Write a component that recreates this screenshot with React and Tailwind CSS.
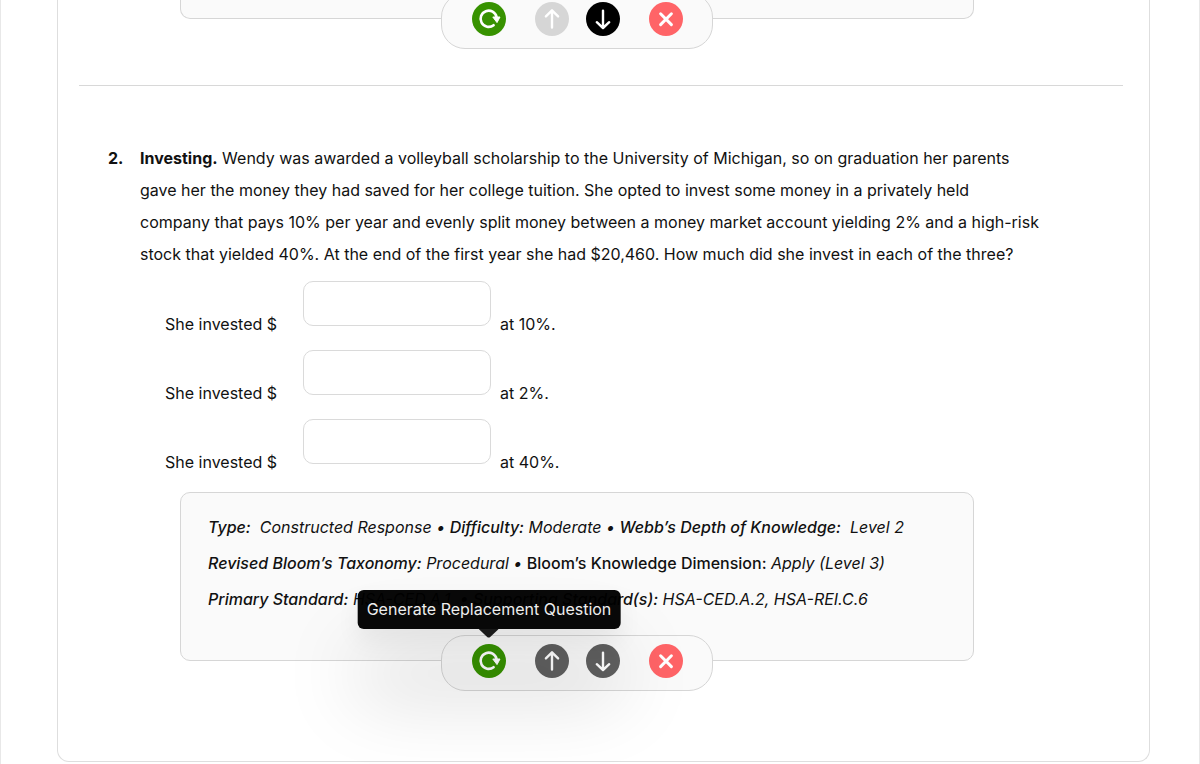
import React, { useState } from "react";
import clsx from "clsx";

const RefreshIcon = () => (
  <svg width="34" height="34" viewBox="0 0 34 34" fill="none" aria-hidden="true">
    <path
      d="M21.6 23.2A8.1 8.1 0 1 1 24.6 15.2"
      stroke="currentColor"
      strokeWidth="2.6"
      strokeLinecap="round"
    />
    <path d="M20.8 15H28L25 20.6Z" fill="currentColor" stroke="currentColor" strokeLinejoin="round" />
  </svg>
);

const UpIcon = () => (
  <svg width="34" height="34" viewBox="0 0 34 34" fill="none" aria-hidden="true">
    <path
      d="M17 25.6V9M10.9 14.4L17 8.3L23.1 14.4"
      stroke="currentColor"
      strokeWidth="2.4"
      strokeLinecap="round"
      strokeLinejoin="round"
    />
  </svg>
);

const DownIcon = () => (
  <svg width="34" height="34" viewBox="0 0 34 34" fill="none" aria-hidden="true">
    <path
      d="M17 8.6V25.4M10.8 20.2L17 26L23.2 20.2"
      stroke="currentColor"
      strokeWidth="2.4"
      strokeLinecap="round"
      strokeLinejoin="round"
    />
  </svg>
);

const CloseIcon = () => (
  <svg width="34" height="34" viewBox="0 0 34 34" fill="none" aria-hidden="true">
    <path
      d="M11.6 11.8L22.4 22.6M22.4 11.8L11.6 22.6"
      stroke="currentColor"
      strokeWidth="3"
      strokeLinecap="round"
    />
  </svg>
);

const Tooltip = ({ children }) => (
  <span
    role="tooltip"
    className="absolute bottom-[49px] left-1/2 z-10 -translate-x-1/2 whitespace-nowrap rounded-md bg-black/97 px-[9px] py-2 text-base leading-[23px] text-[#eee] shadow-[0_12px_24px_rgba(0,0,0,0.06),0_64px_80px_rgba(0,0,0,0.18)]"
  >
    {children}
    <svg
      className="absolute left-1/2 top-full -translate-x-1/2"
      width="20"
      height="9"
      viewBox="0 0 20 9"
      aria-hidden="true"
    >
      <path d="M0 0H20L11.5 8Q10 9 8.5 8Z" fill="#1a1a1a" />
    </svg>
  </span>
);

const RoundButton = ({ label, className, children, ...rest }) => (
  <button
    type="button"
    aria-label={label}
    className={clsx("h-[34px] w-[34px] shrink-0 rounded-full text-white", className)}
    {...rest}
  >
    {children}
  </button>
);

const Toolbar = ({ tip, up, down }) => (
  <div className="relative mx-auto -mt-[26px] flex h-14 w-[272px] items-start gap-[29px] rounded-3xl border border-[#d6d6d6] bg-[#fafafa] pl-[30px] pt-2">
    <div className="relative h-[34px]">
      <RoundButton label="Generate replacement" className="bg-[#379200]">
        <RefreshIcon />
      </RoundButton>
      {tip && <Tooltip>{tip}</Tooltip>}
    </div>
    <div className="flex gap-[17px]">
      <RoundButton label="Move up" className={up}>
        <UpIcon />
      </RoundButton>
      <RoundButton label="Move down" className={down}>
        <DownIcon />
      </RoundButton>
    </div>
    <RoundButton label="Remove" className="bg-[#ff6467]">
      <CloseIcon />
    </RoundButton>
  </div>
);

const Meta = ({ label, children }) => (
  <>
    <span className="font-medium">{label}</span> {children}
  </>
);

const blanks = [
  { id: "ten", rate: "at 10%." },
  { id: "two", rate: "at 2%." },
  { id: "forty", rate: "at 40%." },
];

const App = () => {
  const [answers, setAnswers] = useState({ ten: "", two: "", forty: "" });

  return (
    <div className="min-h-screen border-x border-[#e8e8e8] bg-white font-['Inter',sans-serif] text-base text-[#111]">
      <main className="ml-14 mr-[49px] rounded-b-xl border border-t-0 border-[#dedede] pb-[70px]">
        {/* previous question */}
        <section className="ml-[122px] mr-[175px]">
          <div className="h-[19px] rounded-b-[10px] border border-t-0 border-[#d6d6d6] bg-[#fafafa]" />
          <Toolbar up="bg-[#d6d6d6]" down="bg-black" />
        </section>

        <hr className="ml-[21px] mr-[26px] mt-9 border-[#d8d8d8]" />

        <section className="ml-[50px] mt-14">
          <div className="flex leading-8">
            <span className="w-8 shrink-0 font-bold">2.</span>
            <p className="max-w-[900px]">
              <strong className="font-bold">Investing.</strong> Wendy was awarded a volleyball
              scholarship to the University of Michigan, so on graduation her parents gave her the
              money they had saved for her college tuition. She opted to invest some money in a
              privately held company that pays 10% per year and evenly split money between a money
              market account yielding 2% and a high-risk stock that yielded 40%. At the end of the
              first year she had $20,460. How much did she invest in each of the three?
            </p>
          </div>

          <div className="ml-[57px] mt-[11px] flex flex-col gap-[14px]">
            {blanks.map((b) => (
              <div key={b.id} className="flex h-[55px] items-end">
                <label htmlFor={b.id} className="w-[138px]">
                  She invested $
                </label>
                <input
                  id={b.id}
                  type="text"
                  value={answers[b.id]}
                  onChange={(e) => setAnswers({ ...answers, [b.id]: e.target.value })}
                  className="h-[45px] w-[188px] self-start rounded-[10px] border border-[#dadada] px-3 outline-none"
                />
                <span className="ml-[9px]">{b.rate}</span>
              </div>
            ))}
          </div>
        </section>

        <section className="ml-[122px] mr-[175px] mt-[18px]">
          <div className="rounded-[10px] border border-[#d6d6d6] bg-[#fafafa] px-[27px] pb-[43px] pt-4 italic leading-9">
            <p>
              <Meta label="Type:">&nbsp;Constructed Response</Meta> •{" "}
              <Meta label="Difficulty:">Moderate</Meta> •{" "}
              <Meta label="Webb’s Depth of Knowledge:">&nbsp;Level 2</Meta>
            </p>
            <p>
              <Meta label="Revised Bloom’s Taxonomy:">Procedural</Meta> •{" "}
              <span className="font-medium not-italic">Bloom’s Knowledge Dimension:</span> Apply
              (Level 3)
            </p>
            <p>
              <Meta label="Primary Standard:">HSA-CED.A.1</Meta> &nbsp;•{" "}
              <Meta label="Supporting Standard(s):">HSA-CED.A.2, HSA-REI.C.6</Meta>
            </p>
          </div>
          <Toolbar tip="Generate Replacement Question" up="bg-[#606060]" down="bg-[#606060]" />
        </section>
      </main>
    </div>
  );
};

export default App;
